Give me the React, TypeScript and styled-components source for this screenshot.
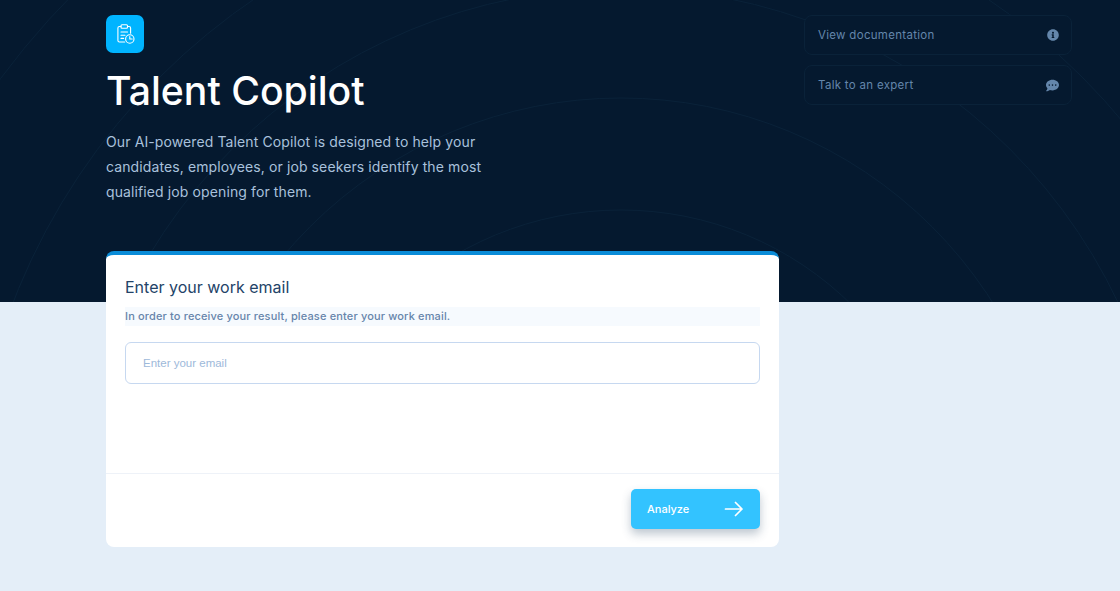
import { createGlobalStyle } from 'styled-components'
import styled from 'styled-components'
import { FaCommentDots, FaInfoCircle } from 'react-icons/fa'

const GlobalStyle = createGlobalStyle`
  html, body {
    margin: 0;
    padding: 0;
    height: 100%;
    background: #e4eef8;
  }
  * {
    box-sizing: border-box;
  }
`

const ARC_RADII = [328, 440, 550, 652, 772]

export default function App() {
  return (
    <Page>
      <GlobalStyle />
      <Hero>
        <HeroArcs viewBox="0 0 1120 302" aria-hidden="true">
          {ARC_RADII.map((r) => (
            <circle key={r} cx={621} cy={538} r={r} fill="none" stroke="#0a2239" strokeWidth={1} />
          ))}
        </HeroArcs>
      </Hero>
      <Content>
        <Main>
          <LogoTile>
            <svg width="22" height="22" viewBox="0 0 22 22" fill="none" stroke="#fff" strokeWidth="1.1" strokeLinecap="round" strokeLinejoin="round">
              <path d="M7 3.5H5.5A1.6 1.6 0 0 0 3.9 5.1v12.3A1.6 1.6 0 0 0 5.5 19h5.2" />
              <path d="M13.5 3.5H15a1.6 1.6 0 0 1 1.6 1.6v5.2" />
              <rect x="7" y="1.7" width="6.5" height="3.6" rx="1" />
              <path d="M7 9h6.5M7 12.2h4M7 15.4h2.6" />
              <circle cx="15.8" cy="16" r="4.2" />
              <path d="M15.8 13.6V16h2.4" />
            </svg>
          </LogoTile>
          <Title>Talent Copilot</Title>
          <Intro>
            Our AI-powered Talent Copilot is designed to help your candidates, employees, or job seekers identify the most qualified job opening for them.
          </Intro>
          <Card>
            <CardBody>
              <CardTitle>Enter your work email</CardTitle>
              <CardHint>In order to receive your result, please enter your work email.</CardHint>
              <EmailInput placeholder="Enter your email" />
            </CardBody>
            <CardFooter>
              <AnalyzeButton>
                Analyze
                <svg width="20" height="16" viewBox="0 0 20 16" fill="none" stroke="#fff" strokeWidth="1.7" strokeLinecap="round" strokeLinejoin="round">
                  <path d="M1.5 8h16.5M11.5 1.5 18 8l-6.5 6.5" />
                </svg>
              </AnalyzeButton>
            </CardFooter>
          </Card>
        </Main>
        <Sidebar>
          <SideLink>
            View documentation
            <FaInfoCircle size={12} />
          </SideLink>
          <SideLink>
            Talk to an expert
            <FaCommentDots size={13} />
          </SideLink>
        </Sidebar>
      </Content>
    </Page>
  )
}

const Page = styled.div`
  position: relative;
  height: 591px;
  overflow: hidden;
  background: #e4eef8;
  font-family: Inter, 'Liberation Sans', sans-serif;
`

const Hero = styled.div`
  position: absolute;
  top: 0;
  left: 0;
  right: 0;
  height: 302px;
  background: #05192f;
`

const HeroArcs = styled.svg`
  display: block;
  width: 100%;
  height: 100%;
`

const Content = styled.div`
  position: relative;
  display: flex;
  align-items: flex-start;
  gap: 25px;
  padding: 15px 48px 0 106px;
`

const Main = styled.main`
  display: flex;
  flex-direction: column;
  width: 673px;
`

const LogoTile = styled.div`
  display: flex;
  align-items: center;
  justify-content: center;
  width: 38px;
  height: 38px;
  border-radius: 7px;
  background: #00b4ff;
`

const Title = styled.h1`
  margin: 12px 0 0;
  font-size: 39.2px;
  line-height: 52px;
  font-weight: 500;
  color: #fff;
`

const Intro = styled.p`
  width: 392px;
  margin: 12px 0 0;
  font-size: 14px;
  line-height: 25px;
  letter-spacing: 0.11px;
  color: #a9c1dc;
`

const Card = styled.section`
  display: flex;
  flex-direction: column;
  height: 296px;
  margin-top: 47px;
  border-top: 4px solid #0a8cd8;
  border-radius: 8px;
  background: #fff;
`

const CardBody = styled.div`
  flex: 1;
  display: flex;
  flex-direction: column;
  padding: 20px 19px 0;
`

const CardTitle = styled.h2`
  margin: 0;
  font-size: 16px;
  line-height: 24px;
  font-weight: 400;
  color: #234368;
`

const CardHint = styled.p`
  margin: 8px 0 0;
  font-size: 11px;
  line-height: 19px;
  font-weight: 500;
  letter-spacing: 0.15px;
  color: #6685ab;
  background: #f6fafe;
`

const EmailInput = styled.input`
  height: 42px;
  margin-top: 16px;
  padding: 0 17px;
  border: 1px solid #c6d8f0;
  border-radius: 6px;
  outline: none;
  font-family: 'Liberation Sans', Arial, sans-serif;
  font-size: 11.5px;
  color: #1f3f66;

  &::placeholder {
    color: #9db9da;
    opacity: 1;
  }
`

const CardFooter = styled.div`
  display: flex;
  justify-content: flex-end;
  height: 74px;
  padding: 15px 19px 0;
  border-top: 1px solid #eef2f8;
`

const AnalyzeButton = styled.button`
  display: flex;
  align-items: center;
  justify-content: space-between;
  width: 129px;
  height: 40px;
  padding: 0 16px;
  border: none;
  border-radius: 5px;
  background: #33c3ff;
  box-shadow: 0 5px 10px rgba(40, 70, 100, 0.3);
  font-family: Inter, 'Liberation Sans', sans-serif;
  font-size: 11px;
  font-weight: 500;
  color: #fff;
`

const Sidebar = styled.aside`
  display: flex;
  flex-direction: column;
  gap: 10px;
  width: 268px;
`

const SideLink = styled.a`
  display: flex;
  align-items: center;
  justify-content: space-between;
  height: 40px;
  padding: 0 12px 0 13px;
  border: 1px solid #0a2239;
  border-radius: 8px;
  background: #05192f;
  font-size: 11.5px;
  letter-spacing: 0.3px;
  color: #6486ab;
`
